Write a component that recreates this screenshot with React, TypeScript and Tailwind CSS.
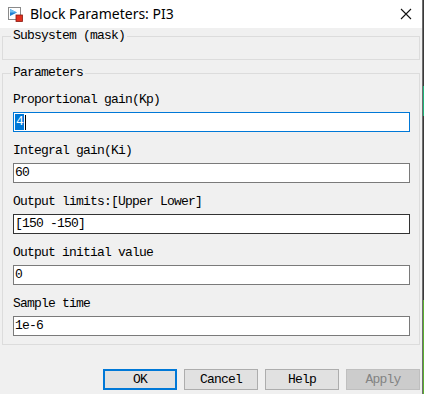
import React from 'react';

const mono = "font-['Liberation_Mono','DejaVu_Sans_Mono',monospace] text-[13px] tracking-[-0.8px] leading-[16px]";

function BlockIcon() {
  return (
    <svg width="15" height="15" viewBox="0 0 15 15">
      <rect x="0.5" y="0.5" width="12" height="12" fill="#ffffff" stroke="#8a8a8a" />
      <path d="M2 2 L9 5.5 L2 9 Z" fill="#1e7fd0" />
      <path d="M2 2 L9 5.5 L2 5.5 Z" fill="#6fc0f0" />
      <rect x="8" y="8" width="6.5" height="6.5" fill="#e0301e" stroke="#8a1a10" strokeWidth="0.8" />
    </svg>
  );
}

type Row = { label: string; value: string; state?: 'focus' | 'hover' };

const rows: Row[] = [
  { label: 'Proportional gain(Kp)', value: '4', state: 'focus' },
  { label: 'Integral gain(Ki)', value: '60' },
  { label: 'Output limits:[Upper Lower]', value: '[150 -150]', state: 'hover' },
  { label: 'Output initial value', value: '0' },
  { label: 'Sample time', value: '1e-6' },
];

function Field({ label, value, state }: Row) {
  const border =
    state === 'focus'
      ? 'border-[#0078d7]'
      : state === 'hover'
      ? 'border-[#333333]'
      : 'border-[#7a7a7a]';
  return (
    <div className="flex flex-col">
      <div className={`${mono} h-[16px] text-black whitespace-pre`}>{label}</div>
      <div className={`mt-[4px] h-[20px] w-[397px] border bg-white pl-[1px] flex items-center ${border}`}>
        {state === 'focus' ? (
          <div className="flex items-center">
            <span className={`${mono} bg-[#0078d7] text-white px-[1px] h-[16px]`}>{value}</span>
            <span className="ml-[1px] h-[15px] w-[1px] bg-black" />
          </div>
        ) : (
          <span className={`${mono} text-black whitespace-pre`}>{value}</span>
        )}
      </div>
    </div>
  );
}

function Button({ label, primary, disabled }: { label: string; primary?: boolean; disabled?: boolean }) {
  const cls = primary
    ? 'border-2 border-[#0078d7] bg-[#e1e1e1] text-black'
    : disabled
    ? 'border border-[#bfbfbf] bg-[#cccccc] text-[#838383]'
    : 'border border-[#adadad] bg-[#e1e1e1] text-black';
  return (
    <div className={`${mono} w-[74px] h-[21px] flex items-center justify-center ${cls}`}>{label}</div>
  );
}

export default function App() {
  return (
    <div className="flex h-[394px] w-[424px] overflow-hidden">
      <div className="w-[422px] h-full bg-[#f0f0f0] flex flex-col">
        <div className="h-[28px] bg-white flex items-center pl-[8px] pr-[10px]">
          <BlockIcon />
          <span className="ml-[7px] font-['Noto_Sans','Liberation_Sans',sans-serif] text-[14px] text-black leading-none">
            Block Parameters: PI3
          </span>
          <div className="ml-auto">
            <svg width="12" height="12" viewBox="0 0 12 12">
              <path d="M1 1 L11 11 M11 1 L1 11" stroke="#111" strokeWidth="1.1" />
            </svg>
          </div>
        </div>

        <fieldset className="ml-[2px] w-[418px] border border-[#dcdcdc] p-0">
          <legend className={`${mono} ml-[8px] px-[2px] text-black`}>Subsystem (mask)</legend>
          <div className="h-[15px]" />
        </fieldset>

        <fieldset className="mt-[5px] ml-[2px] w-[418px] border border-[#dcdcdc] p-0">
          <legend className={`${mono} ml-[8px] px-[2px] text-black`}>Parameters</legend>
          <div className="pt-[11px] pb-[8px] pl-[10px] flex flex-col gap-[11px]">
            {rows.map((r) => (
              <Field key={r.label} {...r} />
            ))}
          </div>
        </fieldset>

        <div className="mt-[24px] flex justify-end gap-[7px] pr-[2px]">
          <Button label="OK" primary />
          <Button label="Cancel" />
          <Button label="Help" />
          <Button label="Apply" disabled />
        </div>
      </div>
      <div className="w-[2px] h-full flex">
        <div className="w-[1px] h-full bg-[#6e6e6e]" />
        <div className="w-[1px] h-full flex flex-col">
          <div className="h-[86px] bg-[#3a3a3a]" />
          <div className="h-[30px] bg-[#1db37a]" />
          <div className="h-[184px] bg-[#3a3a3a]" />
          <div className="flex-1 bg-[#5bb030]" />
        </div>
      </div>
    </div>
  );
}
